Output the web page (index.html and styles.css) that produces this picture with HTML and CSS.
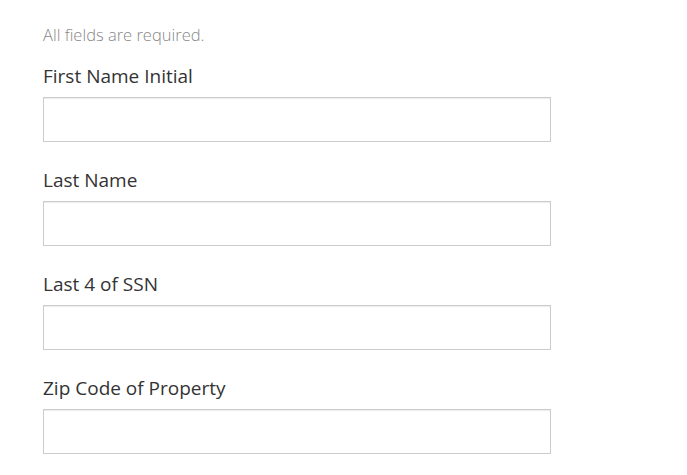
FILE: index.html
```html
<!DOCTYPE html>
<html>
<head>
<meta charset="utf-8">
<link rel="stylesheet" href="styles.css">
</head>
<body>
<form class="form">
  <p class="note">All fields are required.</p>
  <div class="fields">
    <div class="field">
      <label class="label" for="f1">First Name Initial</label>
      <input class="input" id="f1" type="text">
    </div>
    <div class="field">
      <label class="label" for="f2">Last Name</label>
      <input class="input" id="f2" type="text">
    </div>
    <div class="field">
      <label class="label" for="f3">Last 4 of SSN</label>
      <input class="input" id="f3" type="text">
    </div>
    <div class="field">
      <label class="label" for="f4">Zip Code of Property</label>
      <input class="input" id="f4" type="text">
    </div>
  </div>
</form>
</body>
</html>
```
FILE: styles.css
```css
html, body {
  margin: 0;
  padding: 0;
  background: #fff;
}
body {
  font-family: "Open Sans", "Liberation Sans", sans-serif;
  color: #333;
}
.form {
  width: 508px;
  padding: 23px 0 0 43px;
  display: flex;
  flex-direction: column;
  gap: 17px;
}
.note {
  margin: 0;
  font-size: 16.5px;
  font-weight: 300;
  color: #888;
  line-height: 24px;
}
.fields {
  display: flex;
  flex-direction: column;
  gap: 26px;
}
.field {
  display: flex;
  flex-direction: column;
  gap: 9px;
}
.label {
  font-size: 19px;
  line-height: 24px;
  color: #333;
}
.input {
  box-sizing: border-box;
  width: 508px;
  height: 45px;
  margin: 0;
  border: 1px solid #ccc;
  border-radius: 0;
  box-shadow: inset 0 1px 1px rgba(0,0,0,.075);
  background: #fff;
  padding: 6px 12px;
  font-family: inherit;
  font-size: 16px;
}
```
